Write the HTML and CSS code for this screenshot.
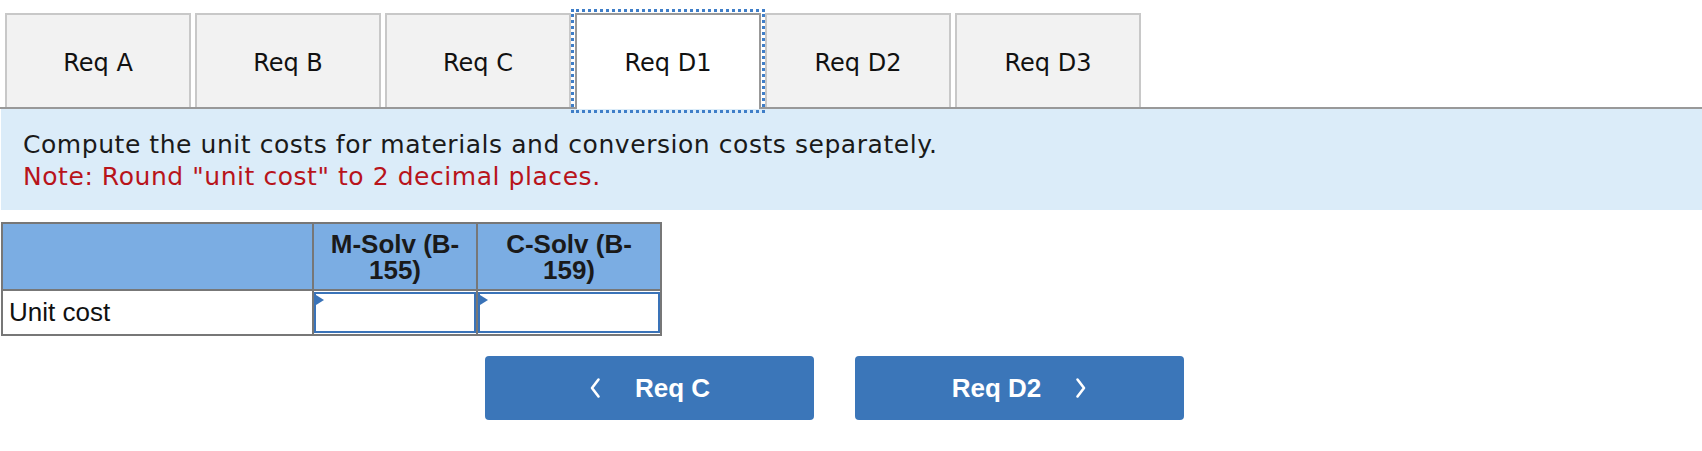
FILE: index.html
```html
<!DOCTYPE html>
<html>
<head>
<meta charset="utf-8">
<link rel="stylesheet" href="styles.css">
</head>
<body>
<div class="tabs">
  <div class="tab">Req A</div>
  <div class="tab">Req B</div>
  <div class="tab">Req C</div>
  <div class="tab active">Req D1</div>
  <div class="tab">Req D2</div>
  <div class="tab">Req D3</div>
</div>
<div class="panel">
  <p class="q">Compute the unit costs for materials and conversion costs separately.</p>
  <p class="note">Note: Round "unit cost" to 2 decimal places.</p>
</div>
<table class="grid">
  <tr class="head">
    <th class="c1"></th>
    <th class="c2">M-Solv (B-155)</th>
    <th class="c3">C-Solv (B-159)</th>
  </tr>
  <tr class="row">
    <td class="label">Unit cost</td>
    <td class="inp"><div class="box"><span class="mark"></span></div></td>
    <td class="inp"><div class="box"><span class="mark"></span></div></td>
  </tr>
</table>
<div class="nav">
  <button class="btn"><svg class="chev" width="12" height="22" viewBox="0 0 12 22"><path d="M9.5 2.5 L3 11 L9.5 19.5" fill="none" stroke="#fff" stroke-width="2.6" stroke-linecap="round" stroke-linejoin="round"/></svg><span>Req C</span></button>
  <button class="btn"><span>Req D2</span><svg class="chev" width="12" height="22" viewBox="0 0 12 22"><path d="M2.5 2.5 L9 11 L2.5 19.5" fill="none" stroke="#fff" stroke-width="2.6" stroke-linecap="round" stroke-linejoin="round"/></svg></button>
</div>
</body>
</html>
```
FILE: styles.css
```css
html, body {
  margin: 0;
  padding: 0;
  background: #fff;
}
body {
  font-family: "DejaVu Sans", Verdana, sans-serif;
  color: #1a1a1a;
}
.tabs {
  display: flex;
  gap: 4px;
  padding: 13px 0 0 5px;
  border-bottom: 2px solid #999;
  height: 94px;
}
.tab {
  box-sizing: border-box;
  width: 186px;
  height: 94px;
  background: #f2f2f2;
  border: 2px solid #c8c8c8;
  border-bottom: none;
  display: flex;
  align-items: center;
  justify-content: center;
  font-size: 24px;
  color: #111;
  padding-top: 3px;
}
.tab.active {
  background: #fff;
  border-color: #999;
  height: 96px;
  padding-bottom: 2px;
  outline: 3px dotted #3f7ec8;
  outline-offset: 1px;
  position: relative;
  z-index: 1;
}
.panel {
  margin-left: 1px;
  background: #dbecf9;
  height: 101px;
  box-sizing: border-box;
  padding: 20px 0 0 22px;
  font-size: 25px;
  letter-spacing: 0.55px;
}
.panel p {
  margin: 0;
  line-height: 32px;
}
.note {
  color: #b8141b;
}
.grid {
  margin: 12px 0 0 1px;
  border-collapse: collapse;
  font-family: "Liberation Sans", Arial, sans-serif;
  font-size: 26px;
}
.grid th, .grid td {
  border: 2px solid #777;
  padding: 0;
}
.head th {
  background: #7badE3;
  height: 65px;
  font-weight: bold;
  line-height: 26px;
  color: #1a1a1a;
  text-align: center;
  vertical-align: middle;
}
.c1 { width: 309px; }
.c2 { width: 150px; padding: 0 6px !important; }
.c3 { width: 164px; padding: 0 9px !important; }
.row td {
  height: 42px;
}
.label {
  padding-left: 6px !important;
  color: #111;
  vertical-align: middle;
}
.inp {
  background: #fff;
  vertical-align: top;
  padding-top: 1px !important;
}
.box {
  box-sizing: border-box;
  height: 41px;
  border: 2px solid #3a73b8;
  position: relative;
}
.mark {
  position: absolute;
  left: 0;
  top: 1px;
  width: 0;
  height: 0;
  border-top: 5px solid transparent;
  border-bottom: 5px solid transparent;
  border-left: 8px solid #3a73b8;
}
.nav {
  display: flex;
  gap: 41px;
  margin: 20px 0 0 485px;
}
.btn {
  width: 329px;
  height: 64px;
  border: none;
  border-radius: 4px;
  background: #3b76b9;
  color: #fff;
  font-family: "Liberation Sans", Arial, sans-serif;
  font-weight: bold;
  font-size: 26px;
  display: flex;
  align-items: center;
  justify-content: center;
  gap: 34px;
  padding: 0;
}
.chev {
  display: block;
}
```
